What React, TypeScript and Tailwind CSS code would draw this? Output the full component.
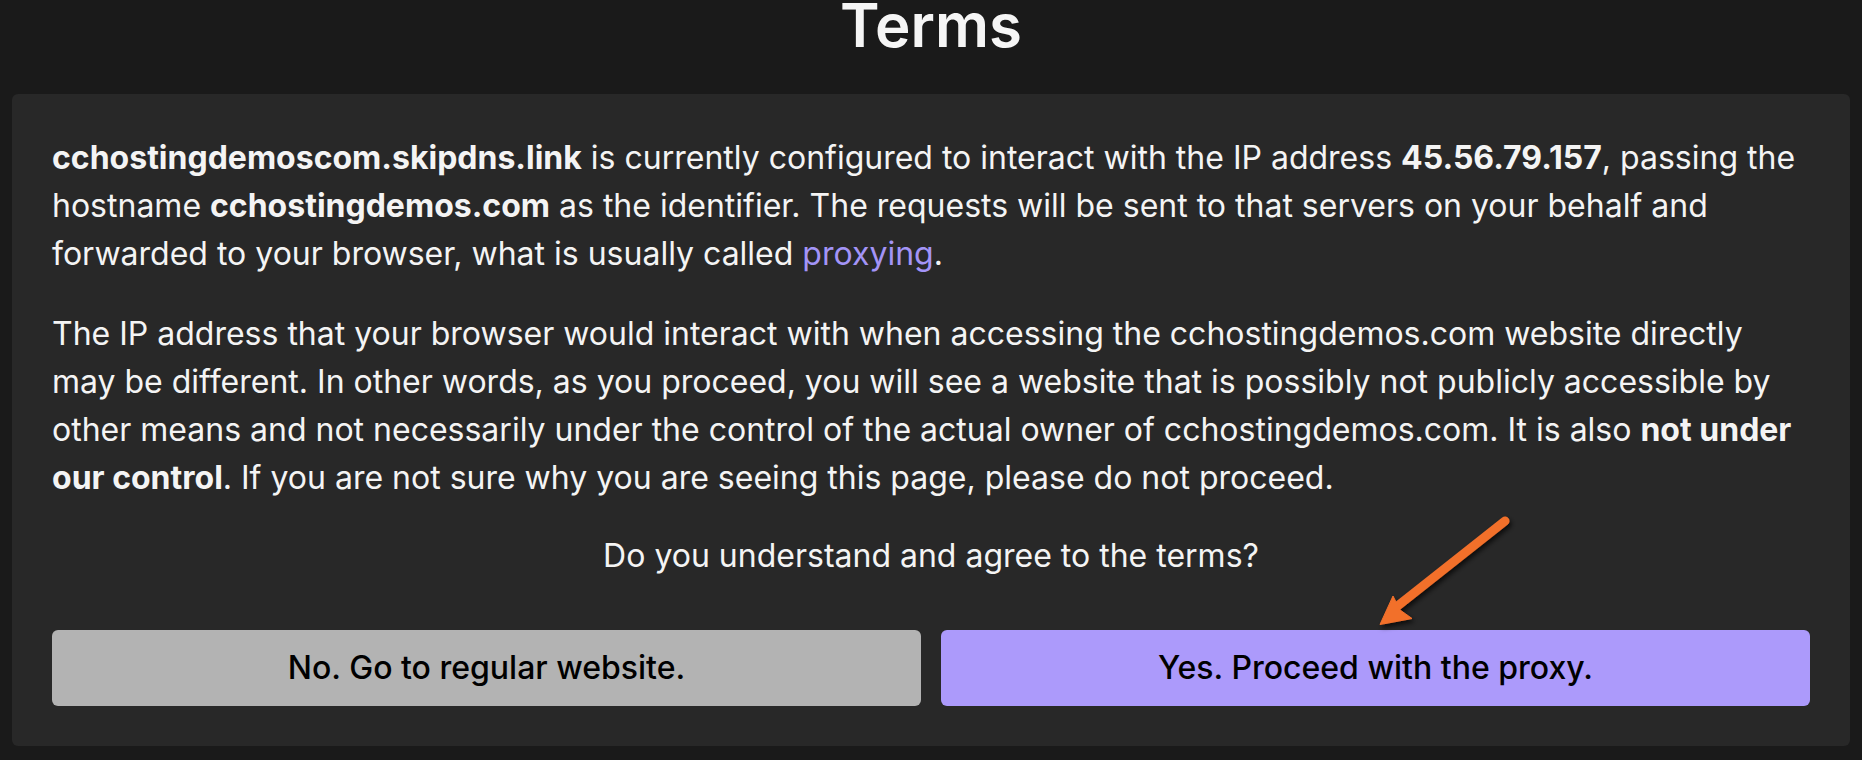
import React from "react";

const Arrow: React.FC = () => (
  <svg
    className="absolute left-0 top-0 pointer-events-none"
    width={1862}
    height={760}
    viewBox="0 0 1862 760"
  >
    <defs>
      <filter id="arrowShadow" x="-20%" y="-20%" width="140%" height="140%">
        <feDropShadow dx="2" dy="3" stdDeviation="2.5" floodColor="#000" floodOpacity="0.7" />
      </filter>
    </defs>
    <g filter="url(#arrowShadow)" fill="#f2702b" stroke="#f2702b">
      <line x1={1505} y1={521} x2={1395} y2={608} strokeWidth={9} strokeLinecap="round" />
      <polygon points="1380,624.5 1393,596 1400,610 1412,618.5" strokeWidth={1} strokeLinejoin="miter" />
    </g>
  </svg>
);

const App: React.FC = () => {
  return (
    <div className="relative w-[1862px] h-[760px] overflow-hidden bg-[#1a1a1a] font-['Inter','Liberation_Sans',sans-serif] text-[#f4f4f4]">
      <h1 className="-mt-[5px] text-center text-[60px] leading-none font-semibold text-[#f5f5f5]">
        Terms
      </h1>

      <div className="mx-3 mt-[39px] rounded-md bg-[#282828] p-10 text-[32px] leading-[48px]">
        <p>
          <b className="font-bold">cchostingdemoscom.skipdns.link</b> is currently configured to interact
          with the IP address <b className="font-bold">45.56.79.157</b>, passing the hostname{" "}
          <b className="font-bold">cchostingdemos.com</b> as the identifier. The requests will be sent to
          that servers on your behalf and forwarded to your browser, what is usually called{" "}
          <a className="text-[#a394f7]">proxying</a>.
        </p>
        <p className="mt-8">
          The IP address that your browser would interact with when accessing the cchostingdemos.com
          website directly may be different. In other words, as you proceed, you will see a website that
          is possibly not publicly accessible by other means and not necessarily under the control of the
          actual owner of cchostingdemos.com. It is also <b className="font-bold">not under our control</b>.
          If you are not sure why you are seeing this page, please do not proceed.
        </p>
        <p className="mt-[30px] text-center">Do you understand and agree to the terms?</p>

        <div className="mt-[50px] grid grid-cols-2 gap-5">
          <button className="h-[76px] rounded-md bg-[#b3b3b3] text-[32px] font-medium text-black">
            No. Go to regular website.
          </button>
          <button className="h-[76px] rounded-md bg-[#ac9afb] text-[32px] font-medium text-black">
            Yes. Proceed with the proxy.
          </button>
        </div>
      </div>

      <Arrow />
    </div>
  );
};

export default App;
